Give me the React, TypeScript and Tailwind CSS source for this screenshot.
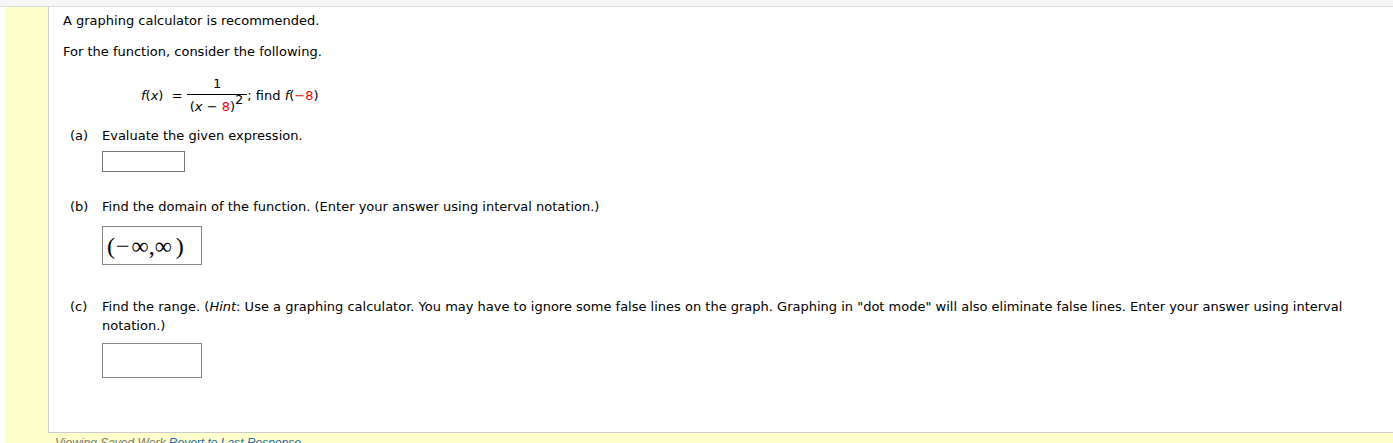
const Red = ({ children }: { children: React.ReactNode }) => (
  <span className="text-[#ff0000]">{children}</span>
);

const App = () => {
  return (
    <div className="h-[443px] w-full overflow-hidden bg-white font-['DejaVu_Sans',sans-serif] text-[13px] text-black">
      {/* top strip */}
      <div className="h-[7px] bg-[#f6f6f6] border-b border-[#dddddd]" />

      <div className="ml-[5px] bg-[#ffffcc]">
        <div className="flex">
          <div className="w-[43px] shrink-0" />
          <div className="flex-1 h-[426px] bg-white border-l border-b border-[#cccccc] pl-[14px] leading-[16px]">
            <p className="mt-[6px]">A graphing calculator is recommended.</p>
            <p className="mt-[15px]">For the function, consider the following.</p>

            {/* equation */}
            <div className="mt-[16px] ml-[78px] flex items-center text-[13px]">
              <span>
                <i>f</i>(<i>x</i>)&nbsp; =&nbsp;
              </span>
              <span className="inline-flex flex-col items-center">
                <span className="leading-[16px] pb-[2px]">1</span>
                <span className="border-t border-black pl-[3px] pr-[4px] leading-[16px] pt-[4px]">
                  (<i>x</i> − <Red>8</Red>)
                  <span className="relative -top-[7px] text-[13px]">2</span>
                </span>
              </span>
              <span>
                ; find <i>f</i>(<Red>−8</Red>)
              </span>
            </div>

            {/* (a) */}
            <div className="mt-[13px] flex">
              <span className="w-[39px] pl-[7px] shrink-0">(a)</span>
              <span>Evaluate the given expression.</span>
            </div>
            <div className="ml-[39px] mt-[7px] h-[21px] w-[83px] border border-[#777777]" />

            {/* (b) */}
            <div className="mt-[27px] flex">
              <span className="w-[39px] pl-[7px] shrink-0">(b)</span>
              <span>Find the domain of the function. (Enter your answer using interval notation.)</span>
            </div>
            <div className="ml-[39px] mt-[11px] h-[39px] w-[100px] border border-[#888888] flex items-center pl-[4px] font-['Liberation_Serif',serif] text-[24px] leading-none">
              <span className="tracking-[1px]">(</span>
              <span className="mr-[2px]">−</span>
              <span>∞</span>
              <span>,</span>
              <span className="mr-[4px]">∞</span>
              <span>)</span>
            </div>

            {/* (c) */}
            <div className="mt-[32px] flex leading-[19px]">
              <span className="w-[39px] pl-[7px] shrink-0">(c)</span>
              <span className="max-w-[1260px]">
                Find the range. (<i>Hint</i>: Use a graphing calculator. You may have to ignore some false lines on the
                graph. Graphing in "dot mode" will also eliminate false lines. Enter your answer using interval notation.)
              </span>
            </div>
            <div className="ml-[39px] mt-[8px] h-[35px] w-[100px] border border-[#888888]" />
          </div>
        </div>

        {/* footer */}
        <div className="pl-[50px] pt-[2px] font-['Liberation_Sans',sans-serif] text-[12px] leading-[16px] italic text-[#777777]">
          Viewing Saved Work <a className="text-[#1f66b0] underline">Revert to Last Response</a>
        </div>
      </div>
    </div>
  );
};

export default App;
